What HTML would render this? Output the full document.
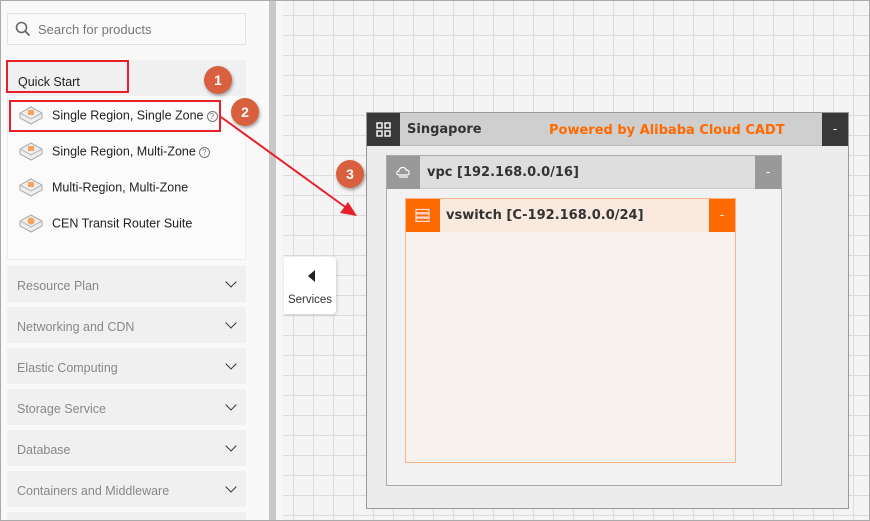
<!DOCTYPE html>
<html style="width:870px;height:521px;overflow:hidden"><head><style>
*{margin:0;padding:0;box-sizing:border-box}
body{width:870px;height:521px;overflow:hidden;font-family:"Liberation Sans",sans-serif;background:#f4f4f4;position:relative}
.abs{position:absolute}
#grid{left:283px;top:0;width:587px;height:521px;background-color:#f4f4f4;
background-image:linear-gradient(#dcdcdc 1px,transparent 1px),linear-gradient(90deg,#dcdcdc 1px,transparent 1px);
background-size:20px 20px;background-position:10px 15px}
#side{left:0;top:0;width:269px;height:521px;background:#f9f9f9}
#bar{left:269px;top:0;width:7px;height:521px;background:#c9c9c9}
#strip{left:276px;top:0;width:7px;height:521px;background:#f7f7f7}
.search{left:7px;top:13px;width:239px;height:32px;border:1px solid #e2e2e2;background:#fafafa;font-size:13px;color:#777;padding:8px 0 0 30px}
.acc{left:7px;width:239px;height:36px;background:#f0f0f0;font-size:12.5px;color:#888;padding:13px 0 0 10px}
.chev{position:absolute;right:11px;top:12px;width:8px;height:8px;border-right:1.6px solid #333;border-bottom:1.6px solid #333;transform:rotate(45deg)}
.item{left:18px;font-size:12.5px;color:#222;height:20px}
.item svg{vertical-align:middle;margin-right:8px}
.badge{width:28px;height:28px;border-radius:50%;background:#d9603f;color:#fff;font-weight:bold;font-size:14px;text-align:center;line-height:28px;box-shadow:1px 2px 3px rgba(0,0,0,.35)}
.red{border:2px solid #e8202a}
.q{display:inline-block;width:11px;height:11px;border:1px solid #777;border-radius:50%;font-size:8px;line-height:9px;text-align:center;color:#777;vertical-align:middle;margin-left:3px}
.mono{font-family:"DejaVu Sans",sans-serif;font-weight:bold;color:#333}
</style></head><body>
<div id="grid" class="abs"></div>
<div id="side" class="abs"></div>
<div id="bar" class="abs"></div>
<div id="strip" class="abs"></div>
<div class="abs" style="left:0;top:0;width:870px;height:521px;border:1px solid #aaa;pointer-events:none;z-index:9"></div>

<div class="abs search"><svg class="abs" style="left:7px;top:7px" width="16" height="16" viewBox="0 0 16 16"><circle cx="6.5" cy="6.5" r="5" fill="none" stroke="#666" stroke-width="1.6"/><line x1="10.3" y1="10.3" x2="14.5" y2="14.5" stroke="#666" stroke-width="1.8"/></svg>Search for products</div>

<div class="abs" style="left:7px;top:60px;width:239px;height:36px;background:#f0f0f0"></div>
<div class="abs" style="left:7px;top:96px;width:239px;height:164px;background:#fbfbfb;border:1px solid #eee;border-top:none"></div>
<div class="abs red" style="left:6px;top:60px;width:123px;height:33px;font-size:12.5px;color:#222;padding:13px 0 0 10px">Quick Start</div>
<div class="abs red" style="left:9px;top:100px;width:212px;height:32px"></div>

<div class="abs item" style="top:106px"><svg width="26" height="20" viewBox="0 0 26 20"><path d="M13 1L24 7V12L13 18L2 12V7Z" fill="#eee" stroke="#aaa"/><path d="M2 7L13 13L24 7" fill="none" stroke="#bbb"/><rect x="10" y="4" width="6" height="5" fill="#f7a35c"/></svg>Single Region, Single Zone<span class="q">?</span></div>
<div class="abs item" style="top:142px"><svg width="26" height="20" viewBox="0 0 26 20"><path d="M13 1L24 7V12L13 18L2 12V7Z" fill="#eee" stroke="#aaa"/><path d="M2 7L13 13L24 7" fill="none" stroke="#bbb"/><rect x="10" y="4" width="6" height="5" fill="#f7a35c"/></svg>Single Region, Multi-Zone<span class="q">?</span></div>
<div class="abs item" style="top:178px"><svg width="26" height="20" viewBox="0 0 26 20"><path d="M13 1L24 7V12L13 18L2 12V7Z" fill="#eee" stroke="#aaa"/><path d="M2 7L13 13L24 7" fill="none" stroke="#bbb"/><rect x="10" y="4" width="6" height="5" fill="#f7a35c"/></svg>Multi-Region, Multi-Zone</div>
<div class="abs item" style="top:214px"><svg width="26" height="20" viewBox="0 0 26 20"><path d="M13 1L24 7V12L13 18L2 12V7Z" fill="#eee" stroke="#aaa"/><path d="M2 7L13 13L24 7" fill="none" stroke="#bbb"/><circle cx="13" cy="7" r="3.5" fill="#f7a35c"/></svg>CEN Transit Router Suite</div>

<div class="abs acc" style="top:266px">Resource Plan<span class="chev"></span></div>
<div class="abs acc" style="top:307px">Networking and CDN<span class="chev"></span></div>
<div class="abs acc" style="top:348px">Elastic Computing<span class="chev"></span></div>
<div class="abs acc" style="top:389px">Storage Service<span class="chev"></span></div>
<div class="abs acc" style="top:430px">Database<span class="chev"></span></div>
<div class="abs acc" style="top:471px">Containers and Middleware<span class="chev"></span></div>
<div class="abs acc" style="top:512px;height:9px"></div>

<div class="abs" style="left:284px;top:257px;width:52px;height:57px;background:#fff;border-radius:0 4px 4px 0;box-shadow:1px 1px 3px rgba(0,0,0,.15);font-size:11.5px;color:#333;text-align:center">
<div style="width:0;height:0;border-top:6px solid transparent;border-bottom:6px solid transparent;border-right:7px solid #222;margin:13px auto 0 24px"></div>
<div style="margin-top:12px">Services</div></div>

<!-- Singapore -->
<div class="abs" style="left:366px;top:112px;width:483px;height:397px;background:#ececec;border:1px solid #999"></div>
<div class="abs" style="left:367px;top:113px;width:481px;height:33px;background:#cfcfcf;border-bottom:1px solid #bbb"></div>
<div class="abs" style="left:367px;top:113px;width:33px;height:33px;background:#383838"><svg style="margin:9px" width="15" height="15" viewBox="0 0 15 15" fill="none" stroke="#fff" stroke-width="1.4"><rect x="1" y="1" width="5" height="5"/><rect x="9" y="1" width="5" height="5"/><rect x="1" y="9" width="5" height="5"/><rect x="9" y="9" width="5" height="5"/></svg></div>
<div class="abs mono" style="left:407px;top:122px;font-size:13px">Singapore</div>
<div class="abs mono" style="left:549px;top:123px;font-size:13px;color:#ff6a00">Powered by Alibaba Cloud CADT</div>
<div class="abs" style="left:822px;top:113px;width:26px;height:33px;background:#383838;color:#fff;text-align:center;line-height:31px;font-size:13px">-</div>

<!-- vpc -->
<div class="abs" style="left:386px;top:155px;width:396px;height:331px;background:#f2f2f2;border:1px solid #aaa"></div>
<div class="abs" style="left:387px;top:156px;width:394px;height:33px;background:#dedede;border-bottom:1px solid #ccc"></div>
<div class="abs" style="left:387px;top:156px;width:33px;height:33px;background:#999"><svg style="margin:8px" width="17" height="17" viewBox="0 0 17 17" fill="none" stroke="#fff" stroke-width="1.2"><path d="M4 11C1 11 1 7 4 7C4 3 10 2 11 6C15 6 15 11 12 11Z"/><line x1="4" y1="13" x2="13" y2="13"/></svg></div>
<div class="abs mono" style="left:427px;top:165px;font-size:13px">vpc [192.168.0.0/16]</div>
<div class="abs" style="left:755px;top:156px;width:26px;height:33px;background:#999;color:#fff;text-align:center;line-height:31px;font-size:13px">-</div>

<!-- vswitch -->
<div class="abs" style="left:405px;top:198px;width:331px;height:265px;background:#f8f2ee;border:1.5px solid #f9b48a"></div>
<div class="abs" style="left:406px;top:199px;width:329px;height:33px;background:#fae9de"></div>
<div class="abs" style="left:406px;top:199px;width:34px;height:33px;background:#ff6a00"><svg style="margin:9px" width="15" height="15" viewBox="0 0 15 15" fill="none" stroke="#fdd" stroke-width="1.2"><rect x="1" y="1.5" width="13" height="3.3"/><rect x="1" y="5.8" width="13" height="3.3"/><rect x="1" y="10.1" width="13" height="3.3"/></svg></div>
<div class="abs mono" style="left:446px;top:208px;font-size:13px">vswitch [C-192.168.0.0/24]</div>
<div class="abs" style="left:709px;top:199px;width:26px;height:33px;background:#ff6a00;color:#fff;text-align:center;line-height:31px;font-size:13px">-</div>

<!-- arrow -->
<svg class="abs" style="left:0;top:0" width="870" height="521"><line x1="221" y1="117" x2="348" y2="209" stroke="#e8202a" stroke-width="2"/><path d="M357 216L340 213L348 202Z" fill="#e8202a"/></svg>

<div class="abs badge" style="left:204px;top:66px">1</div>
<div class="abs badge" style="left:231px;top:98px">2</div>
<div class="abs badge" style="left:336px;top:160px">3</div>
</body></html>
